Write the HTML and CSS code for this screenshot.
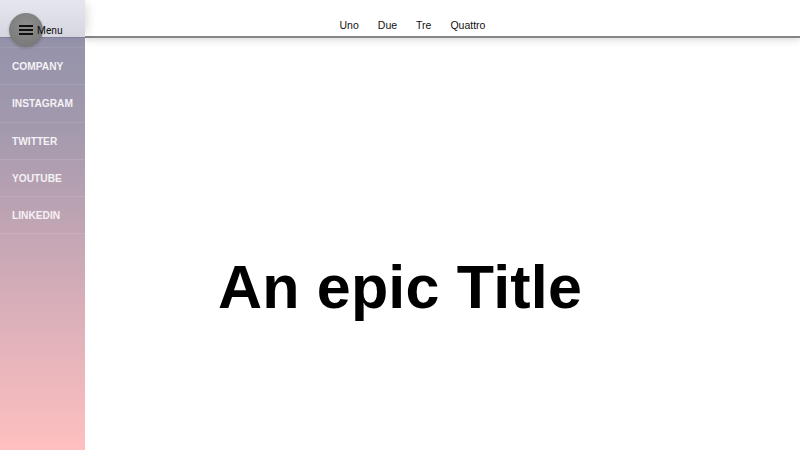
FILE: index.html
```html
<!DOCTYPE html>
<html>
<head>
<meta charset="utf-8">
<link rel="stylesheet" href="styles.css">
</head>
<body>
<div class="page">
  <aside class="sidebar">
    <div class="side-top"></div>
    <nav class="side-nav">
      <a class="side-item">COMPANY</a>
      <a class="side-item">INSTAGRAM</a>
      <a class="side-item">TWITTER</a>
      <a class="side-item">YOUTUBE</a>
      <a class="side-item">LINKEDIN</a>
    </nav>
  </aside>
  <div class="main">
    <header class="topbar">
      <nav class="top-nav">
        <a>Uno</a>
        <a>Due</a>
        <a>Tre</a>
        <a>Quattro</a>
      </nav>
    </header>
    <section class="hero">
      <h1 class="title">An epic Title</h1>
    </section>
  </div>
  <button class="menu-btn">
    <span class="menu-circle">
      <svg width="14" height="12" viewBox="0 0 14 12"><rect x="0" y="1" width="14" height="2" fill="#111"/><rect x="0" y="5" width="14" height="2" fill="#111"/><rect x="0" y="9" width="14" height="2" fill="#111"/></svg>
    </span>
    <span class="menu-label">Menu</span>
  </button>
</div>
</body>
</html>
```
FILE: styles.css
```css
html, body {
  margin: 0;
  padding: 0;
  width: 800px;
  height: 450px;
  overflow: hidden;
  background: #fff;
  font-family: "Liberation Sans", Arial, sans-serif;
}
.page {
  position: relative;
  display: flex;
  width: 800px;
  height: 450px;
}
.sidebar {
  width: 85px;
  flex: none;
  display: flex;
  flex-direction: column;
  background: linear-gradient(to bottom, #8d8fa8 0%, #a59aae 30%, #d5adb8 65%, #ffc0c0 100%);
  position: relative;
  z-index: 2;
}
.side-top {
  height: 37px;
  flex: none;
  background: linear-gradient(to bottom, #e6e7ee, #d4d5df);
  border-bottom: 1px solid #7e8099;
  box-shadow: 6px 0 10px -4px rgba(0,0,0,0.15);
}
.side-nav {
  display: flex;
  flex-direction: column;
  margin-top: 9px;
  border-top: 1px solid rgba(255,255,255,0.08);
}
.side-item {
  display: flex;
  align-items: center;
  padding-left: 12px;
  padding-top: 1px;
  font-size: 10.2px;
  font-weight: bold;
  color: #f5f1f5;
  border-bottom: 1px solid rgba(255,255,255,0.1);
  box-sizing: border-box;
  height: 37.3px;
}
.main {
  flex: 1;
  display: flex;
  flex-direction: column;
}
.topbar {
  height: 36px;
  flex: none;
  background: #fff;
  border-bottom: 2px solid #858585;
  box-shadow: 0 3px 6px rgba(0,0,0,0.12);
  display: flex;
  align-items: center;
  justify-content: center;
  padding-right: 60px;
  position: relative;
  z-index: 1;
}
.top-nav {
  display: flex;
  gap: 19px;
  padding-top: 13px;
  font-size: 10.5px;
  color: #111;
}
.hero {
  flex: 1;
  display: flex;
  align-items: flex-start;
  justify-content: center;
  margin-left: -85px;
}
.title {
  margin: 0;
  margin-top: 219px;
  font-size: 61px;
  font-weight: bold;
  line-height: 1;
  color: #000;
  letter-spacing: 0.2px;
}
.menu-btn {
  position: absolute;
  left: 9px;
  top: 13px;
  margin: 0;
  padding: 0;
  border: 0;
  background: none;
  display: flex;
  align-items: center;
  z-index: 5;
  cursor: pointer;
}
.menu-circle {
  width: 34px;
  height: 34px;
  border-radius: 50%;
  background: radial-gradient(circle at 50% 35%, #8e8e8e, #737373);
  display: flex;
  align-items: center;
  justify-content: center;
  box-shadow: 0 1px 3px rgba(0,0,0,0.2);
}
.menu-label {
  margin-left: -6px;
  font-family: Roboto, "Liberation Sans", sans-serif;
  font-size: 10.2px;
  color: #111;
}
```
